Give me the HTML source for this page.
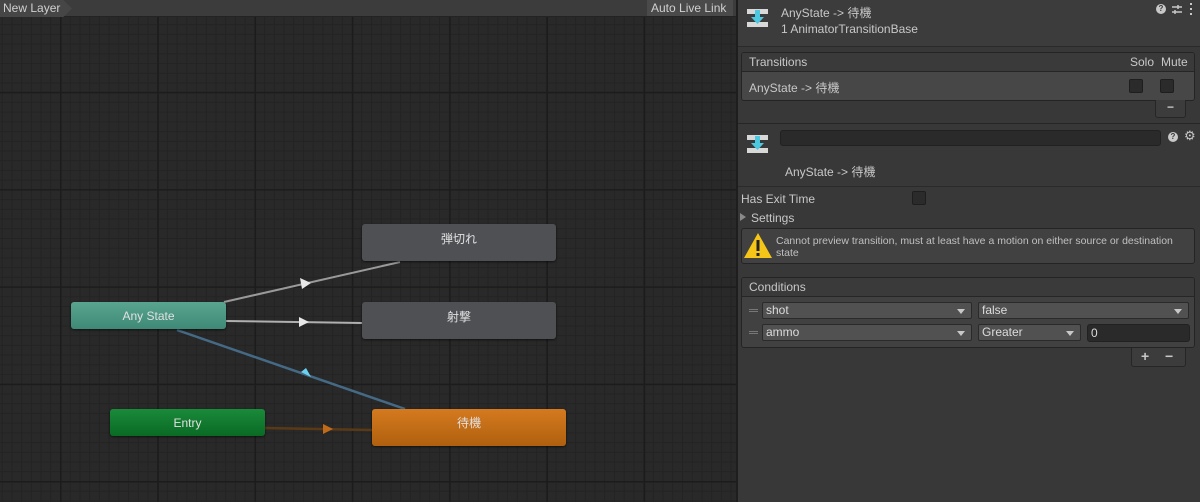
<!DOCTYPE html>
<html><head><meta charset="utf-8"><style>
*{box-sizing:border-box;margin:0;padding:0}
body{width:1200px;height:502px;overflow:hidden;background:#383838;font-family:"Liberation Sans","Noto Sans CJK JP",sans-serif;color:#c8c8c8;font-size:12px;position:relative}
.a{position:absolute}
#canvas{left:0;top:0;width:736px;height:502px;background-color:#292929;
background-image:
linear-gradient(90deg,#1c1c1c 0 1.5px,transparent 1.5px),
linear-gradient(0deg,#1c1c1c 0 1.5px,transparent 1.5px),
linear-gradient(90deg,#232323 0 1px,transparent 1px),
linear-gradient(0deg,#232323 0 1px,transparent 1px);
background-size:97.3px 97.3px,97.3px 97.3px,9.73px 9.73px,9.73px 9.73px;
background-position:60px 0,0 -4px,60px 0,0 -4px;overflow:hidden}
.node{position:absolute;border-radius:3px;text-align:center;color:#e0e0e0;font-size:12px;box-shadow:0 1px 2px rgba(0,0,0,.6)}
.box{border:1px solid #242424;border-radius:3px}
.dd{position:absolute;height:17px;background:#515151;border:1px solid #2a2a2a;border-radius:2px;color:#dcdcdc;padding-left:3px;line-height:15px;font-size:12px}
.dd:after{content:"";position:absolute;right:6px;top:6px;border-left:4px solid transparent;border-right:4px solid transparent;border-top:5px solid #c8c8c8}
.cb{position:absolute;width:14px;height:14px;background:#2b2b2b;border:1px solid #1e1e1e;border-radius:2px}
</style></head><body>
<div id="canvas" class="a">
<div class="a" style="left:0;top:0;width:736px;height:17px;background:#3c3c3c;border-bottom:1px solid #232323"></div>
<div class="a" style="left:0;top:0;width:72px;height:17px;background:#464646;clip-path:polygon(0 0,88% 0,100% 50%,88% 100%,0 100%)"></div>
<div class="a" style="left:3px;top:1px;font-size:12px;color:#d0d0d0">New Layer</div>
<div class="a" style="left:647px;top:0;width:86px;height:16px;background:#4a4a4a;font-size:12px;color:#d0d0d0;padding:1px 0 0 4px">Auto Live Link</div>
<svg class="a" style="left:0;top:0" width="736" height="502">
<line x1="224" y1="302" x2="400" y2="262" stroke="#9a9a9a" stroke-width="2"/>
<polygon points="300,278 311,283 302,289" fill="#e8e8e8"/>
<line x1="226" y1="321" x2="362" y2="323" stroke="#b0b0b0" stroke-width="2"/>
<polygon points="299,317 309,322 299,327" fill="#e8e8e8"/>
<line x1="177" y1="330" x2="405" y2="409" stroke="#456a86" stroke-width="2.5"/>
<polygon points="301,372 311,377 306,368" fill="#6cd0f0"/>
<line x1="265" y1="428" x2="372" y2="430" stroke="#5a3a16" stroke-width="2.5"/>
<polygon points="323,424 333,429 323,434" fill="#c06a1a"/>
</svg>
<div class="node" style="left:362px;top:224px;width:194px;height:37px;background:#4e5054;line-height:30px">弾切れ</div>
<div class="node" style="left:362px;top:302px;width:194px;height:37px;background:#4e5054;line-height:30px">射撃</div>
<div class="node" style="left:71px;top:302px;width:155px;height:27px;background:linear-gradient(#5aa58f,#3f8a76);line-height:29px">Any State</div>
<div class="node" style="left:110px;top:409px;width:155px;height:27px;background:linear-gradient(#1a8a3a,#0a6a24);line-height:29px">Entry</div>
<div class="node" style="left:372px;top:409px;width:194px;height:37px;background:linear-gradient(#d47a20,#b0600e);line-height:29px">待機</div>
</div>
<div class="a" style="left:736px;top:0;width:2px;height:502px;background:#1e1e1e"></div>

<div class="a" style="left:738px;top:0;width:462px;height:47px;background:#3c3c3c;border-bottom:1px solid #2a2a2a"></div>
<svg class="a" style="left:746px;top:7px" width="24" height="22"><rect x="1" y="2" width="21" height="5" fill="#d8d8d8"/><rect x="1" y="15" width="21" height="5" fill="#d8d8d8"/><rect x="9" y="3" width="5" height="8" fill="#4cc8e0"/><polygon points="5,10 18,10 11.5,17" fill="#4cc8e0"/></svg>
<div class="a" style="left:781px;top:4px;font-size:12px">AnyState -&gt; 待機</div>
<div class="a" style="left:781px;top:22px;font-size:12px">1 AnimatorTransitionBase</div>
<div class="a" style="left:1156px;top:4px;width:10px;height:10px;border-radius:50%;background:#c8c8c8;color:#383838;font-size:8px;font-weight:bold;text-align:center;line-height:10px">?</div>
<svg class="a" style="left:1171px;top:4px" width="12" height="11"><path d="M1 3h10M7 1v4M1 8h10M4 6v4" stroke="#c8c8c8" stroke-width="1.5"/></svg>
<svg class="a" style="left:1189px;top:3px" width="4" height="12"><rect x="1" y="0" width="2" height="2" fill="#c8c8c8"/><rect x="1" y="5" width="2" height="2" fill="#c8c8c8"/><rect x="1" y="10" width="2" height="2" fill="#c8c8c8"/></svg>

<div class="a box" style="left:741px;top:52px;width:454px;height:49px;background:#474747;overflow:hidden">
<div class="a" style="left:0;top:0;width:454px;height:19px;background:#3a3a3a;border-bottom:1px solid #262626"></div>
<div class="a" style="left:7px;top:2px">Transitions</div>
<div class="a" style="left:388px;top:2px">Solo</div>
<div class="a" style="left:419px;top:2px">Mute</div>
<div class="a" style="left:7px;top:26px">AnyState -&gt; 待機</div>
</div>
<div class="cb" style="left:1129px;top:79px"></div>
<div class="cb" style="left:1160px;top:79px"></div>
<div class="a" style="left:1155px;top:100px;width:31px;height:18px;background:#3c3c3c;border:1px solid #262626;border-top:none;border-radius:0 0 3px 3px;text-align:center;font-weight:bold;line-height:14px">−</div>
<div class="a" style="left:738px;top:123px;width:462px;height:1px;background:#262626"></div>
<svg class="a" style="left:746px;top:133px" width="24" height="22"><rect x="1" y="2" width="21" height="5" fill="#d8d8d8"/><rect x="1" y="15" width="21" height="5" fill="#d8d8d8"/><rect x="9" y="3" width="5" height="8" fill="#4cc8e0"/><polygon points="5,10 18,10 11.5,17" fill="#4cc8e0"/></svg>
<div class="a" style="left:780px;top:130px;width:381px;height:16px;background:#2a2a2a;border:1px solid #212121;border-radius:3px"></div>
<div class="a" style="left:1168px;top:132px;width:10px;height:10px;border-radius:50%;background:#c8c8c8;color:#383838;font-size:8px;font-weight:bold;text-align:center;line-height:10px">?</div>
<div class="a" style="left:1184px;top:128px;font-size:13px">⚙</div>
<div class="a" style="left:785px;top:163px">AnyState -&gt; 待機</div>
<div class="a" style="left:738px;top:186px;width:462px;height:1px;background:#2a2a2a"></div>
<div class="a" style="left:741px;top:192px">Has Exit Time</div>
<div class="cb" style="left:912px;top:191px"></div>
<div class="a" style="left:740px;top:213px;border-top:4px solid transparent;border-bottom:4px solid transparent;border-left:6px solid #8a8a8a"></div>
<div class="a" style="left:751px;top:211px">Settings</div>
<div class="a box" style="left:741px;top:228px;width:454px;height:36px;background:#414141"></div>
<svg class="a" style="left:744px;top:232px" width="30" height="27"><polygon points="14,1 28,26 0,26" fill="#f5c518"/><rect x="12.5" y="8" width="3" height="11" fill="#222"/><rect x="12.5" y="21" width="3" height="3" fill="#222"/></svg>
<div class="a" style="left:776px;top:235px;font-size:10.5px;line-height:12px;color:#c0c0c0;width:405px">Cannot preview transition, must at least have a motion on either source or destination state</div>
<div class="a box" style="left:741px;top:277px;width:454px;height:71px;background:#414141;overflow:hidden">
<div class="a" style="left:0;top:0;width:454px;height:19px;background:#3a3a3a;border-bottom:1px solid #262626"></div>
<div class="a" style="left:7px;top:2px">Conditions</div>
<div class="a" style="left:7px;top:31px;width:9px;height:3px;border-top:1px solid #777;border-bottom:1px solid #777"></div>
<div class="a" style="left:7px;top:53px;width:9px;height:3px;border-top:1px solid #777;border-bottom:1px solid #777"></div>
</div>
<div class="dd" style="left:762px;top:302px;width:210px">shot</div>
<div class="dd" style="left:978px;top:302px;width:211px">false</div>
<div class="dd" style="left:762px;top:324px;width:210px">ammo</div>
<div class="dd" style="left:978px;top:324px;width:103px">Greater</div>
<div class="a" style="left:1087px;top:324px;width:103px;height:18px;background:#2a2a2a;border:1px solid #212121;border-radius:3px;padding-left:3px;line-height:16px;color:#dcdcdc">0</div>
<div class="a" style="left:1131px;top:348px;width:55px;height:19px;background:#3c3c3c;border:1px solid #262626;border-top:none;border-radius:0 0 3px 3px;font-weight:bold;font-size:14px;line-height:16px"><span class="a" style="left:9px;top:0">+</span><span class="a" style="left:33px;top:0">−</span></div>
</body></html>
